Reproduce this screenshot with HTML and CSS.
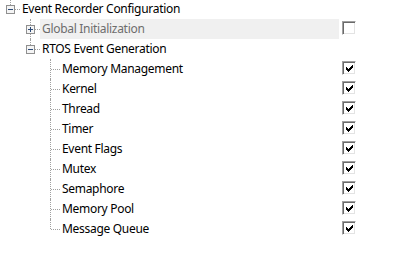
FILE: index.html
```html
<!DOCTYPE html>
<html lang="en">
<head>
    <meta charset="UTF-8">
    <title>Event Recorder Configuration</title>
    <link rel="stylesheet" href="styles.css">
</head>
<body>
    <div class="tree">
        <div class="row">
            <span class="cell top-line">
                <svg class="expander" width="9" height="9" viewBox="0 0 9 9"><rect x="0.5" y="0.5" width="8" height="8" /><path d="M2 4.5h5" /></svg>
            </span>
            <span class="label">Event Recorder Configuration</span>
        </div>

        <div class="row">
            <span class="cell"></span>
            <span class="cell tee">
                <svg class="expander" width="9" height="9" viewBox="0 0 9 9"><rect x="0.5" y="0.5" width="8" height="8" /><path d="M2 4.5h5M4.5 2v5" /></svg>
            </span>
            <span class="label disabled selected">Global Initialization</span>
            <span class="value"><span class="checkbox"></span></span>
        </div>

        <div class="row">
            <span class="cell"></span>
            <span class="cell elbow">
                <svg class="expander" width="9" height="9" viewBox="0 0 9 9"><rect x="0.5" y="0.5" width="8" height="8" /><path d="M2 4.5h5" /></svg>
            </span>
            <span class="label">RTOS Event Generation</span>
        </div>

        <div class="row">
            <span class="cell"></span><span class="cell"></span>
            <span class="cell tee"></span>
            <span class="label">Memory Management</span>
            <span class="value"><span class="checkbox"><svg class="tick" width="7" height="7" viewBox="0 0 7 7"><path d="M6 0h1v1h-1zM5 1h2v1h-2zM0 2h1v1h-1zM4 2h3v1h-3zM0 3h2v1h-2zM3 3h3v1h-3zM0 4h5v1h-5zM1 5h3v1h-3zM2 6h1v1h-1z" /></svg></span></span>
        </div>
        <div class="row">
            <span class="cell"></span><span class="cell"></span>
            <span class="cell tee"></span>
            <span class="label">Kernel</span>
            <span class="value"><span class="checkbox"><svg class="tick" width="7" height="7" viewBox="0 0 7 7"><path d="M6 0h1v1h-1zM5 1h2v1h-2zM0 2h1v1h-1zM4 2h3v1h-3zM0 3h2v1h-2zM3 3h3v1h-3zM0 4h5v1h-5zM1 5h3v1h-3zM2 6h1v1h-1z" /></svg></span></span>
        </div>
        <div class="row">
            <span class="cell"></span><span class="cell"></span>
            <span class="cell tee"></span>
            <span class="label">Thread</span>
            <span class="value"><span class="checkbox"><svg class="tick" width="7" height="7" viewBox="0 0 7 7"><path d="M6 0h1v1h-1zM5 1h2v1h-2zM0 2h1v1h-1zM4 2h3v1h-3zM0 3h2v1h-2zM3 3h3v1h-3zM0 4h5v1h-5zM1 5h3v1h-3zM2 6h1v1h-1z" /></svg></span></span>
        </div>
        <div class="row">
            <span class="cell"></span><span class="cell"></span>
            <span class="cell tee"></span>
            <span class="label">Timer</span>
            <span class="value"><span class="checkbox"><svg class="tick" width="7" height="7" viewBox="0 0 7 7"><path d="M6 0h1v1h-1zM5 1h2v1h-2zM0 2h1v1h-1zM4 2h3v1h-3zM0 3h2v1h-2zM3 3h3v1h-3zM0 4h5v1h-5zM1 5h3v1h-3zM2 6h1v1h-1z" /></svg></span></span>
        </div>
        <div class="row">
            <span class="cell"></span><span class="cell"></span>
            <span class="cell tee"></span>
            <span class="label">Event Flags</span>
            <span class="value"><span class="checkbox"><svg class="tick" width="7" height="7" viewBox="0 0 7 7"><path d="M6 0h1v1h-1zM5 1h2v1h-2zM0 2h1v1h-1zM4 2h3v1h-3zM0 3h2v1h-2zM3 3h3v1h-3zM0 4h5v1h-5zM1 5h3v1h-3zM2 6h1v1h-1z" /></svg></span></span>
        </div>
        <div class="row">
            <span class="cell"></span><span class="cell"></span>
            <span class="cell tee"></span>
            <span class="label">Mutex</span>
            <span class="value"><span class="checkbox"><svg class="tick" width="7" height="7" viewBox="0 0 7 7"><path d="M6 0h1v1h-1zM5 1h2v1h-2zM0 2h1v1h-1zM4 2h3v1h-3zM0 3h2v1h-2zM3 3h3v1h-3zM0 4h5v1h-5zM1 5h3v1h-3zM2 6h1v1h-1z" /></svg></span></span>
        </div>
        <div class="row">
            <span class="cell"></span><span class="cell"></span>
            <span class="cell tee"></span>
            <span class="label">Semaphore</span>
            <span class="value"><span class="checkbox"><svg class="tick" width="7" height="7" viewBox="0 0 7 7"><path d="M6 0h1v1h-1zM5 1h2v1h-2zM0 2h1v1h-1zM4 2h3v1h-3zM0 3h2v1h-2zM3 3h3v1h-3zM0 4h5v1h-5zM1 5h3v1h-3zM2 6h1v1h-1z" /></svg></span></span>
        </div>
        <div class="row">
            <span class="cell"></span><span class="cell"></span>
            <span class="cell tee"></span>
            <span class="label">Memory Pool</span>
            <span class="value"><span class="checkbox"><svg class="tick" width="7" height="7" viewBox="0 0 7 7"><path d="M6 0h1v1h-1zM5 1h2v1h-2zM0 2h1v1h-1zM4 2h3v1h-3zM0 3h2v1h-2zM3 3h3v1h-3zM0 4h5v1h-5zM1 5h3v1h-3zM2 6h1v1h-1z" /></svg></span></span>
        </div>
        <div class="row">
            <span class="cell"></span><span class="cell"></span>
            <span class="cell elbow"></span>
            <span class="label">Message Queue</span>
            <span class="value"><span class="checkbox"><svg class="tick" width="7" height="7" viewBox="0 0 7 7"><path d="M6 0h1v1h-1zM5 1h2v1h-2zM0 2h1v1h-1zM4 2h3v1h-3zM0 3h2v1h-2zM3 3h3v1h-3zM0 4h5v1h-5zM1 5h3v1h-3zM2 6h1v1h-1z" /></svg></span></span>
        </div>
    </div>
</body>
</html>
```

FILE: styles.css
```css
body {
    margin: 0;
    background-color: #ffffff;
    font-family: 'Noto Sans', 'Open Sans', sans-serif;
    font-size: 12px;
    letter-spacing: -0.3px;
    color: #000000;
}

.tree {
    margin-top: -1px;
    width: 412px;
}

.row {
    display: flex;
    align-items: center;
    height: 20px;
}

/* tree guide cells, 20px per level */
.cell {
    position: relative;
    flex: none;
    width: 20px;
    height: 20px;
}

.cell.top-line::before,
.cell.tee::before,
.cell.elbow::before {
    content: '';
    position: absolute;
    left: 10px;
    top: 0;
    border-left: 1px dotted #a0a0a0;
}

.cell.top-line::before {
    height: 6px;
}

.cell.tee::before {
    height: 20px;
}

.cell.elbow::before {
    height: 10px;
}

.cell::after {
    content: '';
    position: absolute;
    left: 11px;
    top: 10px;
    width: 9px;
    border-top: 1px dotted #a0a0a0;
}

.cell:not(.top-line):not(.tee):not(.elbow)::after {
    display: none;
}

.expander {
    position: absolute;
    left: 6px;
    top: 6px;
    z-index: 1;
}

.expander rect {
    fill: #f4f4f4;
    stroke: #8f8f8f;
    stroke-width: 1;
}

.expander path {
    stroke: #2c4a78;
    stroke-width: 1;
}

.label {
    flex: 1;
    height: 20px;
    line-height: 20px;
    padding-left: 2px;
    white-space: nowrap;
}

.label.selected {
    background-color: #f0f0f0;
}

.label.disabled {
    color: #6d6d6d;
}

.value {
    flex: none;
    width: 73px;
    height: 20px;
    padding-left: 3px;
    box-sizing: border-box;
}

.checkbox {
    display: block;
    position: relative;
    width: 14px;
    height: 14px;
    margin-top: 2px;
    box-sizing: border-box;
    background-color: #ffffff;
    border: 1px solid;
    border-color: #a0a0a0 #ffffff #ffffff #a0a0a0;
    box-shadow: inset 1px 1px #696969, inset -1px -1px #e3e3e3;
}

.tick {
    position: absolute;
    left: 3px;
    top: 3px;
    shape-rendering: crispEdges;
}

.tick path {
    fill: #000000;
}
```
